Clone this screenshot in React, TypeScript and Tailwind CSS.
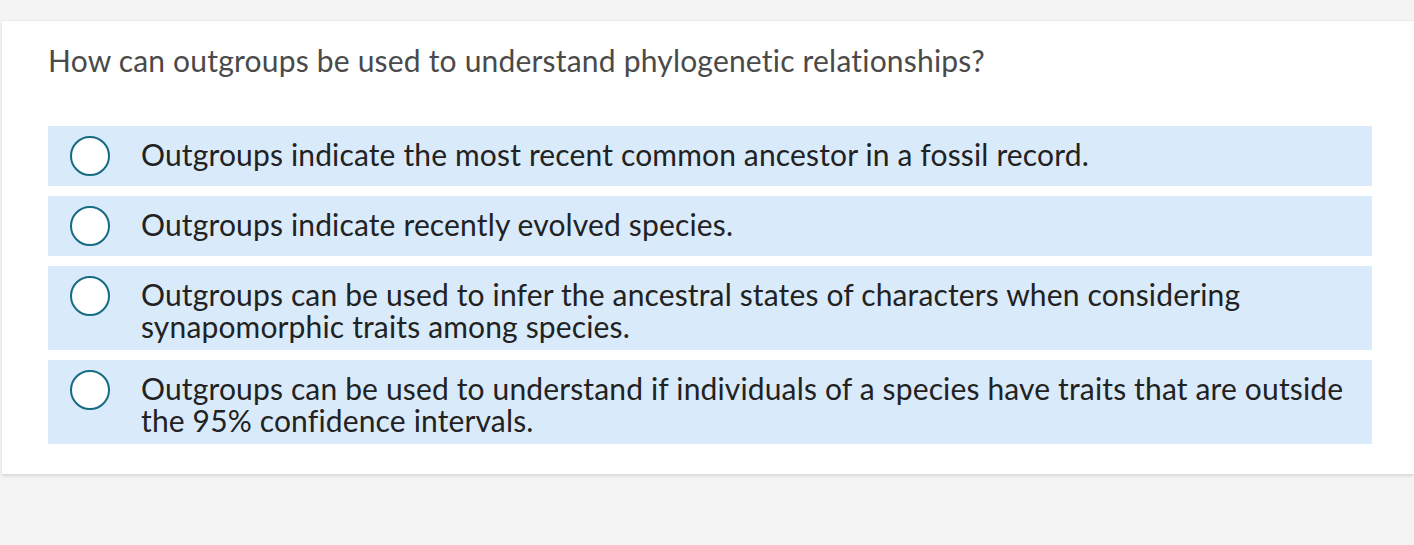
const question = "How can outgroups be used to understand phylogenetic relationships?";

const options = [
  "Outgroups indicate the most recent common ancestor in a fossil record.",
  "Outgroups indicate recently evolved species.",
  "Outgroups can be used to infer the ancestral states of characters when considering synapomorphic traits among species.",
  "Outgroups can be used to understand if individuals of a species have traits that are outside the 95% confidence intervals.",
];

function OptionRow({ label }: { label: string }) {
  return (
    <label className="flex items-start min-h-[60px] pt-[10px] pb-[8px] pl-[22px] pr-4 bg-[#d9eafb] cursor-pointer">
      <span className="w-10 h-10 shrink-0 rounded-full border-2 border-[#146b82] bg-white" />
      <span className="ml-[31px] mt-[2px] text-[30px] leading-[32px] tracking-[0.15px] text-[#222]">{label}</span>
    </label>
  );
}

export default function App() {
  return (
    <div className="min-h-screen bg-[#f4f4f4] pt-5 pl-[2px] font-['Lato',sans-serif]">
      <div className="w-[1412px] bg-white border-t border-[#ececec] shadow-[0_2px_3px_rgba(0,0,0,0.12)] pl-[46px] pr-[42px] pt-[21px] pb-[30px]">
        <h2 className="text-[30px] leading-[36px] tracking-[0.2px] text-[#4a4a4a] font-normal">{question}</h2>
        <div className="mt-[48px] flex flex-col gap-[10px]">
          {options.map((o, i) => (
            <OptionRow key={i} label={o} />
          ))}
        </div>
      </div>
    </div>
  );
}
